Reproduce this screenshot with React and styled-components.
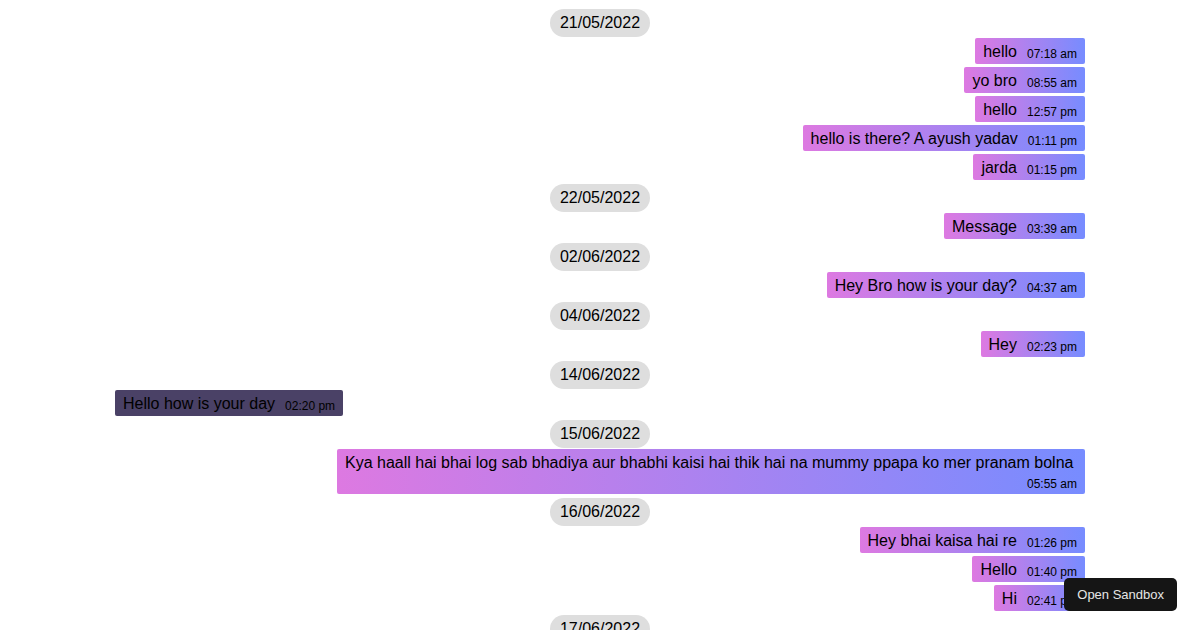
import styled, { createGlobalStyle } from 'styled-components'

const Global = createGlobalStyle`
  body {
    margin: 8px;
    background: #fff;
    font-family: 'Liberation Sans', Arial, sans-serif;
    color: #000;
  }
`

const Chat = styled.div`
  width: 970px;
  margin: 0 auto;
  display: flex;
  flex-direction: column;
`

const DateRow = styled.div`
  display: flex;
  justify-content: center;
  margin: 1px 0 1px;
`

const DatePill = styled.span`
  background: #dedede;
  border-radius: 14px;
  padding: 5px 10px;
  font-size: 16px;
  line-height: 18px;
`

const Row = styled.div`
  display: flex;
  justify-content: ${p => (p.$mine ? 'flex-end' : 'flex-start')};
  margin-bottom: 3px;
`

const Bubble = styled.div`
  box-sizing: border-box;
  max-width: 748px;
  display: flex;
  flex-wrap: wrap;
  justify-content: flex-start;
  align-items: flex-end;
  column-gap: 10px;
  row-gap: 5px;
  padding: 5px 8px 3px;
  border-radius: 2px;
  background: ${p =>
    p.$mine ? 'linear-gradient(to right, #dd79e1, #778cff)' : '#4a4166'};
`

const Text = styled.span`
  font-size: 16px;
  line-height: 18px;
`

const Time = styled.span`
  font-size: 12px;
  line-height: 14px;
  margin-left: auto;
`

const SandboxButton = styled.button`
  position: fixed;
  right: 23px;
  bottom: 19px;
  background: #151515;
  color: #e6e6e6;
  border: none;
  border-radius: 5px;
  padding: 9px 13px;
  font-family: 'Liberation Sans', Arial, sans-serif;
  font-size: 13px;
  line-height: 15px;
`

const days = [
  {
    date: '21/05/2022',
    msgs: [
      ['hello', '07:18 am', true],
      ['yo bro', '08:55 am', true],
      ['hello', '12:57 pm', true],
      ['hello is there? A ayush yadav', '01:11 pm', true],
      ['jarda', '01:15 pm', true],
    ],
  },
  { date: '22/05/2022', msgs: [['Message', '03:39 am', true]] },
  { date: '02/06/2022', msgs: [['Hey Bro how is your day?', '04:37 am', true]] },
  { date: '04/06/2022', msgs: [['Hey', '02:23 pm', true]] },
  { date: '14/06/2022', msgs: [['Hello how is your day', '02:20 pm', false]] },
  {
    date: '15/06/2022',
    msgs: [
      [
        'Kya haall hai bhai log sab bhadiya aur bhabhi kaisi hai thik hai na mummy ppapa ko mer pranam bolna',
        '05:55 am',
        true,
      ],
    ],
  },
  {
    date: '16/06/2022',
    msgs: [
      ['Hey bhai kaisa hai re', '01:26 pm', true],
      ['Hello', '01:40 pm', true],
      ['Hi', '02:41 pm', true],
    ],
  },
  { date: '17/06/2022', msgs: [['Hello', '09:12 am', true]] },
]

export default function App() {
  return (
    <>
      <Global />
      <Chat>
        {days.map(d => (
          <div key={d.date}>
            <DateRow>
              <DatePill>{d.date}</DatePill>
            </DateRow>
            {d.msgs.map(([text, time, mine], i) => (
              <Row key={i} $mine={mine}>
                <Bubble $mine={mine}>
                  <Text>{text}</Text>
                  <Time>{time}</Time>
                </Bubble>
              </Row>
            ))}
          </div>
        ))}
      </Chat>
      <SandboxButton>Open Sandbox</SandboxButton>
    </>
  )
}
